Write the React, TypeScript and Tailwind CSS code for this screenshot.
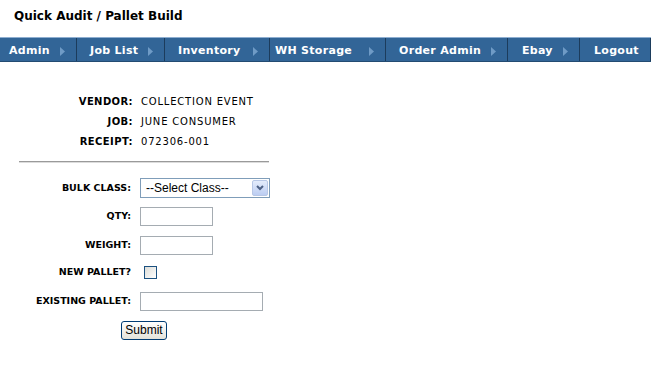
const NAV = [
  { label: "Admin", w: 77, pl: 9, arrow: true },
  { label: "Job List", w: 88, pl: 13, arrow: true },
  { label: "Inventory", w: 105, pl: 13, arrow: true },
  { label: "WH Storage", w: 116, pl: 5, arrow: true },
  { label: "Order Admin", w: 122, pl: 13, arrow: true },
  { label: "Ebay", w: 72, pl: 14, arrow: true },
  { label: "Logout", w: 71, pl: 14, arrow: false },
];

const INFO = [
  { k: "VENDOR:", v: "COLLECTION EVENT" },
  { k: "JOB:", v: "JUNE CONSUMER" },
  { k: "RECEIPT:", v: "072306-001" },
];

function Arrow() {
  return (
    <svg width="5" height="9" viewBox="0 0 5 9" className="ml-auto mr-[11px]">
      <path d="M0 0 L5 4.5 L0 9 Z" fill="#6f9bc6" />
    </svg>
  );
}

function Label({ children }: { children: React.ReactNode }) {
  return (
    <div className="w-[131px] pt-[1px] text-right text-[9.5px] font-bold text-black">
      {children}
    </div>
  );
}

export default function App() {
  return (
    <div className="w-[659px] h-[369px] bg-white font-['DejaVu_Sans',Verdana,sans-serif] overflow-hidden">
      <div className="pl-[14px] pt-[7px] h-[37px] text-[12px] font-bold text-black">
        Quick Audit / Pallet Build
      </div>

      {/* nav bar */}
      <div className="flex w-[651px] h-[25px] bg-[#326597] border-t border-[#8eaed0] border-b border-b-[#234b72]">
        {NAV.map((n) => (
          <div
            key={n.label}
            className="flex items-center h-full pt-[3px] border-r border-[#1c3c5c] text-white text-[11px] font-bold tracking-[0.3px]"
            style={{ width: n.w, paddingLeft: n.pl }}
          >
            <span>{n.label}</span>
            {n.arrow && <Arrow />}
          </div>
        ))}
      </div>

      {/* receipt info */}
      <div className="mt-[30px] flex flex-col">
        {INFO.map((r) => (
          <div key={r.k} className="flex items-baseline h-[20px] leading-[20px]">
            <div className="w-[133px] text-right text-[10px] font-bold tracking-[0.4px] text-black">{r.k}</div>
            <div className="ml-[8px] text-[10px] text-black tracking-[0.8px]">{r.v}</div>
          </div>
        ))}
      </div>

      <div className="ml-[19px] mt-[9px] w-[250px] h-[2px] border-t border-[#9a9a9a] border-b border-b-[#dcdcdc]" />

      {/* form */}
      <div className="mt-[14px] flex flex-col">
        <div className="flex items-center h-[21px]">
          <Label>BULK CLASS:</Label>
          <div className="ml-[9px] flex items-center w-[130px] h-[20px] border border-[#7f9db9] bg-white">
            <span className="pl-[5px] text-[12px] text-black font-['Liberation_Sans',Arial,sans-serif]">--Select Class--</span>
            <div className="ml-auto mr-[1px] w-[16px] h-[16px] rounded-[2px] border border-[#b7c7e6] bg-gradient-to-b from-[#e4ecfb] to-[#bccdf2] flex items-center justify-center">
              <svg width="8" height="6" viewBox="0 0 8 6">
                <path d="M1 1 L4 4 L7 1" fill="none" stroke="#4d6185" strokeWidth="2" />
              </svg>
            </div>
          </div>
        </div>

        <div className="flex items-center h-[20px] mt-[8px]">
          <Label>QTY:</Label>
          <div className="ml-[9px] w-[73px] h-[19px] border border-[#a5acb2] bg-white" />
        </div>

        <div className="flex items-center h-[20px] mt-[9px]">
          <Label>WEIGHT:</Label>
          <div className="ml-[9px] w-[73px] h-[19px] border border-[#a5acb2] bg-white" />
        </div>

        <div className="flex items-center h-[20px] mt-[7px]">
          <Label>NEW PALLET?</Label>
          <div className="ml-[13px] w-[13px] h-[13px] border border-[#1c5180] bg-gradient-to-br from-[#dcdcd7] to-white" />
        </div>

        <div className="flex items-center h-[20px] mt-[9px]">
          <Label>EXISTING PALLET:</Label>
          <div className="ml-[9px] w-[123px] h-[19px] border border-[#a5acb2] bg-white" />
        </div>

        <div className="mt-[6px] ml-[121px]">
          <button className="w-[46px] h-[19px] rounded-[3px] border border-[#003c74] bg-gradient-to-b from-white to-[#e3e2da] text-[12px] text-black font-['Liberation_Sans',Arial,sans-serif] leading-none">
            Submit
          </button>
        </div>
      </div>
    </div>
  );
}
